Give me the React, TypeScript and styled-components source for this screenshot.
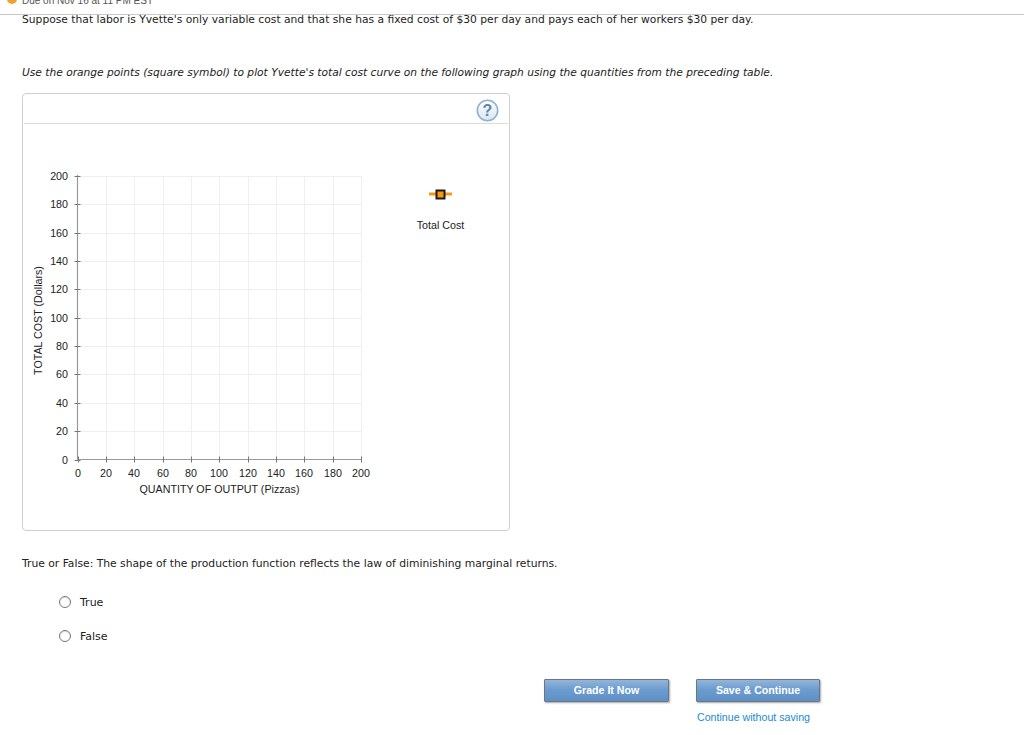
import React from "react";
import styled, { createGlobalStyle } from "styled-components";

const Global = createGlobalStyle`
  html, body { margin: 0; padding: 0; background: #fff; }
  body { font-family: "DejaVu Sans", Verdana, sans-serif; color: #222; }
`;

const Page = styled.div`
  width: 1024px;
  height: 735px;
  overflow: hidden;
`;
const TopBar = styled.div`
  height: 14px;
  border-bottom: 1px solid #c8c8c8;
  overflow: hidden;
  display: flex;
  align-items: flex-end;
  gap: 5px;
  padding-left: 7px;
`;
const DueDot = styled.span`
  width: 10px;
  height: 10px;
  border-radius: 50%;
  background: #f0a030;
  margin-bottom: 1px;
  flex: none;
  transform: translateY(-9px);
`;
const DueText = styled.span`
  font: 10px "Liberation Sans", Arial, sans-serif;
  color: #555;
  line-height: 12px;
  white-space: nowrap;
  transform: translateY(-7px);
`;
const Main = styled.main`
  padding-left: 22px;
`;
const Para = styled.p<{ $top: number; $size: number; $italic?: boolean }>`
  margin: ${(p) => p.$top}px 0 0;
  font-size: ${(p) => p.$size}px;
  line-height: 9px;
  font-style: ${(p) => (p.$italic ? "italic" : "normal")};
  white-space: nowrap;
`;
const Card = styled.section`
  box-sizing: border-box;
  width: 488px;
  height: 438px;
  margin-top: 16px;
  border: 1px solid #cfcfcf;
  border-radius: 4px;
`;
const CardHead = styled.div`
  box-sizing: border-box;
  height: 30px;
  margin: 0 1px;
  padding: 3px 9px 0 0;
  border-bottom: 1px solid #dcdcdc;
  display: flex;
  align-items: center;
  justify-content: flex-end;
`;
const ChartSvg = styled.svg`
  display: block;
`;
const Options = styled.div`
  margin-top: 28px;
  padding-left: 37px;
  display: flex;
  flex-direction: column;
  gap: 22px;
`;
const Option = styled.label`
  display: flex;
  align-items: center;
  gap: 9px;
  height: 12px;
  font-size: 11px;
`;
const Radio = styled.span`
  box-sizing: border-box;
  width: 12px;
  height: 12px;
  border: 1px solid #777;
  border-radius: 50%;
  background: #fff;
  box-shadow: inset 0 1px 1px #ddd;
`;
const Footer = styled.footer`
  margin-top: 37px;
  padding-right: 204px;
  display: flex;
  justify-content: flex-end;
  align-items: flex-start;
  gap: 27px;
`;
const Col = styled.div`
  width: 124px;
  display: flex;
  flex-direction: column;
`;
const Btn = styled.button`
  box-sizing: border-box;
  width: 100%;
  min-width: 124px;
  flex: none;
  height: 23px;
  padding: 0 0 2px;
  border: 1px solid #6b7680;
  border-radius: 1px;
  background: linear-gradient(#93b5da, #6c9ccf 45%, #5f90c6);
  box-shadow: 1px 1px 2px rgba(0, 0, 0, 0.35);
  color: #fff;
  font: bold 10.6px "Liberation Sans", Arial, sans-serif;
`;
const GradeBtn = styled(Btn)`
  width: 125px;
`;
const Skip = styled.a`
  margin: 8px 0 0 1px;
  font: 10.65px/14px "Liberation Sans", Arial, sans-serif;
  color: #1a8ad0;
  white-space: nowrap;
`;

const X0 = 54.5;
const Y0 = 335.5;
const STEP = 28.35;
const ticks = Array.from({ length: 11 }, (_, i) => i);
const labelStyle = { fontFamily: '"Liberation Sans", Arial, sans-serif', fontSize: 10.7, fill: "#222" };

function Chart() {
  const xEnd = X0 + STEP * 10;
  const yEnd = Y0 - STEP * 10;
  return (
    <ChartSvg width={486} height={407} viewBox="0 0 486 407">
      {ticks.slice(1).map((i) => (
        <g key={i} stroke="#efefef" strokeWidth={1}>
          <line x1={Math.round(X0 + STEP * i) + 0.5} x2={Math.round(X0 + STEP * i) + 0.5} y1={yEnd} y2={Y0} />
          <line x1={X0} x2={xEnd} y1={Math.round(Y0 - STEP * i) + 0.5} y2={Math.round(Y0 - STEP * i) + 0.5} />
        </g>
      ))}
      <line x1={X0} x2={X0} y1={yEnd - 1} y2={Y0} stroke="#999" strokeWidth={1.2} />
      <line x1={X0} x2={xEnd} y1={Y0} y2={Y0} stroke="#999" strokeWidth={1.2} />
      {ticks.map((i) => {
        const x = Math.round(X0 + STEP * i) + 0.5;
        const y = Math.round(Y0 - STEP * i) + 0.5;
        return (
          <g key={i}>
            <line x1={x} x2={x} y1={Y0 - 3} y2={Y0 + 3} stroke="#777" />
            <line x1={X0 - 3} x2={X0 + 3} y1={y} y2={y} stroke="#777" />
            <text x={X0 - 9.5} y={y + 3} textAnchor="end" style={labelStyle}>{i * 20}</text>
            <text x={x - 0.5} y={Y0 + 17} textAnchor="middle" style={labelStyle}>{i * 20}</text>
          </g>
        );
      })}
      <text x={196.5} y={369} textAnchor="middle" style={labelStyle}>QUANTITY OF OUTPUT (Pizzas)</text>
      <text transform="translate(19 196.5) rotate(-90)" textAnchor="middle" style={labelStyle}>TOTAL COST (Dollars)</text>
      <line x1={406} x2={429} y1={70} y2={70} stroke="#f59a12" strokeWidth={3} />
      <rect x={413.5} y={66.5} width={8} height={8} fill="#f59a12" stroke="#1a1a1a" strokeWidth={2} />
      <text x={417.5} y={105} textAnchor="middle" style={labelStyle}>Total Cost</text>
    </ChartSvg>
  );
}

function HelpIcon() {
  return (
    <svg width={23} height={23} viewBox="0 0 23 23">
      <defs>
        <linearGradient id="helpFill" x1="0" y1="0" x2="0" y2="1">
          <stop offset="0" stopColor="#ffffff" />
          <stop offset="1" stopColor="#d8e5f1" />
        </linearGradient>
      </defs>
      <circle cx={11.5} cy={11.5} r={10.2} fill="url(#helpFill)" stroke="#8fb0cf" strokeWidth={1.6} />
      <text x={11.5} y={17} textAnchor="middle" fontFamily='"Liberation Sans", Arial, sans-serif' fontSize={16} fontWeight={700} fill="#5a86ad">?</text>
    </svg>
  );
}

export default function App() {
  return (
    <Page>
      <Global />
      <TopBar>
        <DueDot />
        <DueText>Due on Nov 16 at 11 PM EST</DueText>
      </TopBar>
      <Main>
        <Para $top={0} $size={10.72}>Suppose that labor is Yvette's only variable cost and that she has a fixed cost of $30 per day and pays each of her workers $30 per day.</Para>
        <Para $top={44} $size={10.66} $italic>Use the orange points (square symbol) to plot Yvette's total cost curve on the following graph using the quantities from the preceding table.</Para>
        <Card>
          <CardHead><HelpIcon /></CardHead>
          <Chart />
        </Card>
        <Para $top={28} $size={10.76}>True or False: The shape of the production function reflects the law of diminishing marginal returns.</Para>
        <Options>
          <Option><Radio />True</Option>
          <Option><Radio />False</Option>
        </Options>
      </Main>
      <Footer>
        <GradeBtn>Grade It Now</GradeBtn>
        <Col>
          <Btn>Save &amp; Continue</Btn>
          <Skip>Continue without saving</Skip>
        </Col>
      </Footer>
    </Page>
  );
}
